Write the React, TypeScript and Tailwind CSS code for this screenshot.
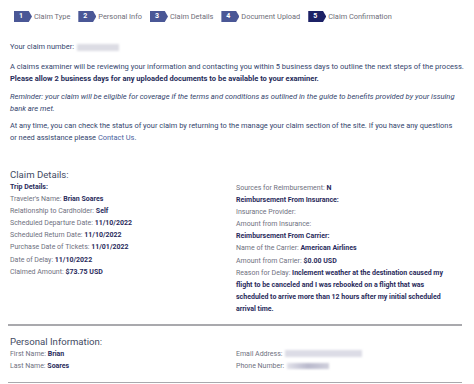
import React from "react";

const steps = [
  { n: "1", label: "Claim Type", active: false },
  { n: "2", label: "Personal Info", active: false },
  { n: "3", label: "Claim Details", active: false },
  { n: "4", label: "Document Upload", active: false },
  { n: "5", label: "Claim Confirmation", active: true },
];

function Row({ label, value }: { label: string; value?: string }) {
  return (
    <div>
      <span className="text-[#6f7180]">{label}</span>
      {value ? <span className="font-bold text-[#2a2b5c]"> {value}</span> : null}
    </div>
  );
}

function Heading({ children }: { children: React.ReactNode }) {
  return <div className="font-bold text-[#2a2b5c]">{children}</div>;
}

export default function App() {
  return (
    <div
      className="w-[474px] h-[384px] overflow-hidden bg-white"
      style={{ fontFamily: "Roboto, 'Liberation Sans', sans-serif" }}
    >
      {/* Steps */}
      <div className="flex items-center pt-[11px] pl-[14px] h-[22px] gap-[8px] text-[7.4px]">
        {steps.map((s) => (
          <div key={s.n} className="flex items-center gap-[2px]">
            <div
              className={`w-[18px] h-[11px] flex items-center pl-[5px] text-white font-bold text-[7px] [clip-path:polygon(0_0,82%_0,100%_50%,82%_100%,0_100%)] ${
                s.active ? "bg-[#1c2166]" : "bg-[#4a5796]"
              }`}
            >
              {s.n}
            </div>
            <span className="text-[#6e6e78]">{s.label}</span>
          </div>
        ))}
      </div>

      <div className="pl-[10px] pr-[10px] text-[7.45px] leading-[12px] text-[#34456e]">
        <div className="mt-[19px] flex items-center">
          <span>Your claim number:</span>
          <span className="ml-[3px] inline-block w-[42px] h-[7px] bg-[#dcdce4] blur-[1px]" />
        </div>

        <p className="mt-[8px] text-[7.55px]">
          A claims examiner will be reviewing your information and contacting you within 5 business days to outline the next steps of the process.
          <br />
          <span className="font-bold text-[#1f2c5a]">
            Please allow 2 business days for any uploaded documents to be available to your examiner.
          </span>
        </p>

        <p className="mt-[6px] italic text-[7.6px]">
          Reminder: your claim will be eligible for coverage if the terms and conditions as outlined in the guide to benefits provided by your issuing bank are met.
        </p>

        <p className="mt-[5px] pr-[4px]">
          At any time, you can check the status of your claim by returning to the manage your claim section of the site. If you have any questions or need assistance please <span className="text-[#4a63a0]">Contact Us</span>.
        </p>
      </div>

      <div className="ml-[8px] mr-[12px] mt-[25px]">
        <div className="pl-[2px] text-[9.6px] leading-[12px] text-[#434b63]">Claim Details:</div>
        <div className="pl-[2px] grid grid-cols-[226px_1fr] text-[7px] leading-[12.1px] mt-[0px]">
          <div>
            <Heading>Trip Details:</Heading>
            <Row label="Traveler's Name:" value="Brian Soares" />
            <Row label="Relationship to Cardholder:" value="Self" />
            <Row label="Scheduled Departure Date:" value="11/10/2022" />
            <Row label="Scheduled Return Date:" value="11/10/2022" />
            <Row label="Purchase Date of Tickets:" value="11/01/2022" />
            <Row label="Date of Delay:" value="11/10/2022" />
            <Row label="Claimed Amount:" value="$73.75 USD" />
          </div>
          <div className="pt-[1px] pr-[4px]">
            <Row label="Sources for Reimbursement:" value="N" />
            <Heading>Reimbursement From Insurance:</Heading>
            <Row label="Insurance Provider:" />
            <Row label="Amount from Insurance:" />
            <Heading>Reimbursement From Carrier:</Heading>
            <Row label="Name of the Carrier:" value="American Airlines" />
            <Row label="Amount from Carrier:" value="$0.00 USD" />
            <Row
              label="Reason for Delay:"
              value="Inclement weather at the destination caused my flight to be canceled and I was rebooked on a flight that was scheduled to arrive more than 12 hours after my initial scheduled arrival time."
            />
          </div>
        </div>
        <div className="mt-[9px] h-[1.5px] bg-[#a9a9ad]" />

        <div className="pl-[2px] mt-[10px] text-[9.6px] leading-[12px] text-[#434b63]">Personal Information:</div>
        <div className="pl-[2px] grid grid-cols-[226px_1fr] text-[7px] leading-[12.1px] mt-[0px]">
          <div>
            <Row label="First Name:" value="Brian" />
            <Row label="Last Name:" value="Soares" />
          </div>
          <div>
            <div className="flex items-center h-[12.1px]">
              <span className="text-[#6f7180]">Email Address:</span>
              <span className="ml-[3px] inline-block w-[77px] h-[7px] bg-[#dcdce6] blur-[1px]" />
            </div>
            <div className="flex items-center h-[12.1px]">
              <span className="text-[#6f7180]">Phone Number:</span>
              <span className="ml-[3px] inline-block w-[42px] h-[6px] bg-gradient-to-r from-[#e2e2ea] via-[#b9b9cc] to-[#d0d0dc] blur-[1px]" />
            </div>
          </div>
        </div>
        <div className="mt-[10px] h-[1.5px] bg-[#a9a9ad]" />
      </div>
    </div>
  );
}
